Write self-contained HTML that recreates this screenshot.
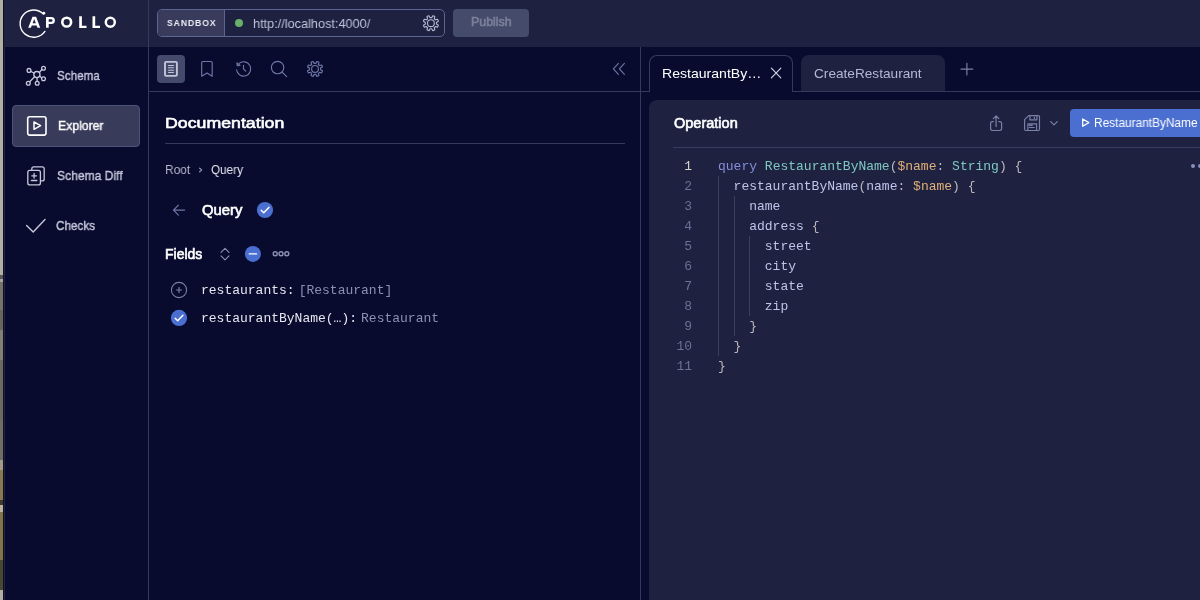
<!DOCTYPE html>
<html><head><meta charset="utf-8">
<style>
*{margin:0;padding:0;box-sizing:border-box}
html,body{width:1200px;height:600px;overflow:hidden;background:#080b2d;font-family:"Liberation Sans",sans-serif}
.a{position:absolute}
.txt{white-space:nowrap;line-height:1;transform-origin:0 0;will-change:transform}
svg.a{overflow:visible}
#strip{left:0;top:0;width:3px;height:600px;background:linear-gradient(#b1aea7 0px,#b1aea7 275px,#58565a 275px,#58565a 279px,#a5a3a8 279px,#a5a3a8 282px,#77726c 282px,#77726c 310px,#6a6560 310px,#6a6560 330px,#847e76 330px,#847e76 360px,#6c6866 360px,#6c6866 420px,#706c69 420px,#706c69 460px,#a29b8c 460px,#a29b8c 470px,#877a52 470px,#877a52 500px,#3d3b36 500px,#3d3b36 505px,#b9b29e 505px,#b9b29e 512px,#807448 512px,#807448 560px,#4a4638 560px,#4a4638 590px,#b0aea8 590px,#b0aea8 600px)}
#strip2{left:3px;top:0;width:1px;height:600px;background:#111}
#strip3{left:4px;top:47px;width:1px;height:553px;background:#1d2250}
#top{left:4px;top:0;width:1196px;height:47px;background:#1e213f}
#vl1{left:148px;top:0;width:1px;height:600px;background:#353a5c}
#vl2{left:640px;top:47px;width:1px;height:553px;background:#353a5c}
.code{will-change:transform;font-family:"Liberation Mono",monospace;font-size:13px;line-height:20px;white-space:pre;color:#c0c4ea}
.ln{will-change:transform;font-family:"Liberation Mono",monospace;font-size:13px;line-height:20px;white-space:pre;color:#6b7096;text-align:right;width:30px}
.kw{color:#858ddc}.nm{color:#7fc9c0}.vr{color:#e0b07a}.pu{color:#b9b8bd}
.guide{width:1px;background:#3b3f62}
</style></head><body>
<div id="strip" class="a"></div><div id="strip2" class="a"></div><div id="strip3" class="a"></div>
<div id="top" class="a"></div>
<div id="vl1" class="a"></div>
<div id="vl2" class="a"></div>

<!-- Logo -->
<svg class="a" style="left:0;top:0" width="148" height="47" viewBox="0 0 148 47">
  <path d="M43.1 13.8 A13.6 13.6 0 1 0 44.9 31.4" fill="none" stroke="#fff" stroke-width="1.4" stroke-linecap="round"/>
  <circle cx="43.8" cy="13.2" r="1.45" fill="#fff"/>
  <path fill="#fff" fill-rule="evenodd" d="M28.2 27.8 L32.5 16.8 L36.1 16.8 L40.2 27.8 L37.5 27.8 L36.6 25.4 L31.8 25.4 L30.9 27.8 Z M32.6 23.2 L35.8 23.2 L34.2 18.9 Z"/>
  <path fill="#fff" fill-rule="evenodd" d="M46 27.8 V16.9 H51.3 A3.6 3.6 0 0 1 51.3 24.1 H48.7 V27.8 Z M48.7 19.2 V21.8 H51.2 A1.3 1.3 0 0 0 51.2 19.2 Z"/>
  <circle cx="66.7" cy="22.15" r="4.4" fill="none" stroke="#fff" stroke-width="2.6"/>
  <path fill="#fff" d="M79.2 16.3 H81.9 V25.8 H86.5 V27.9 H79.2 Z M92.5 16.3 H95.2 V25.8 H100 V27.9 H92.5 Z"/>
  <circle cx="110.3" cy="22.2" r="4.5" fill="none" stroke="#fff" stroke-width="2.5"/>
</svg>

<!-- Sidebar nav -->
<div class="a" style="left:12px;top:105px;width:128px;height:42px;background:#393b5a;border:1px solid #4a5379;border-radius:4px"></div>
<svg class="a" style="left:0;top:0" width="148" height="300" viewBox="0 0 148 300" fill="none" stroke="#c5c8dc" stroke-width="1.3" stroke-linecap="round" stroke-linejoin="round">
  <!-- schema -->
  <circle cx="36.9" cy="74.6" r="3.1"/>
  <circle cx="29" cy="70.4" r="1.9"/><circle cx="43.5" cy="68.3" r="1.9"/><circle cx="43.5" cy="78.8" r="1.9"/>
  <circle cx="28.3" cy="83.2" r="1.9"/><circle cx="37.2" cy="83.2" r="1.9"/>
  <path d="M30.7 71.3 L34.2 73.2 M41.9 69.5 L39.2 72.6 M41.8 77.9 L39.8 76.2 M29.7 81.8 L34.6 76.8 M37.1 81.3 L37.0 77.7"/>
  <!-- explorer -->
  <rect x="27.7" y="116.8" width="18.3" height="18.3" rx="2" stroke="#fff" stroke-width="1.6"/>
  <path d="M34 122 L40.6 125.6 L34 129.3 Z" stroke="#fff" stroke-width="1.5"/>
  <!-- schema diff -->
  <path d="M31.8 169.5 V168.9 A2 2 0 0 1 33.8 166.9 H42.2 A2 2 0 0 1 44.2 168.9 V178.9 A2 2 0 0 1 42.2 180.9 H41"/>
  <rect x="27.8" y="170.4" width="12.6" height="14.5" rx="2"/>
  <path d="M34.1 173.4 V178.1 M31.8 175.8 H36.5 M31.4 180.5 H36.8"/>
  <!-- checks -->
  <path d="M26.6 225.4 L33.2 232 L45 219.6" stroke-width="1.4"/>
</svg>

<!-- Top bar controls -->
<div class="a" style="left:157px;top:9px;width:288px;height:28px;border:1px solid #5c6494;border-radius:5px;overflow:hidden">
  <div class="a" style="left:0;top:0;width:67px;height:26px;background:#393b5c;border-right:1px solid #5c6494"></div>
</div>
<div class="a" style="left:235px;top:19px;width:8px;height:8px;border-radius:50%;background:#6ab06a"></div>
<svg class="a" style="left:0;top:0" width="460" height="47" viewBox="0 0 460 47" fill="none" stroke="#b5bad4" stroke-width="1.1" stroke-linejoin="round"><path d="M438.36 25.11A7.7 7.7 0 0 1 437.53 27.12L435.38 26.56A5.6 5.6 0 0 1 434.26 27.68L434.82 29.83A7.7 7.7 0 0 1 432.81 30.66L431.69 28.74A5.6 5.6 0 0 1 430.11 28.74L428.99 30.66A7.7 7.7 0 0 1 426.98 29.83L427.54 27.68A5.6 5.6 0 0 1 426.42 26.56L424.27 27.12A7.7 7.7 0 0 1 423.44 25.11L425.36 23.99A5.6 5.6 0 0 1 425.36 22.41L423.44 21.29A7.7 7.7 0 0 1 424.27 19.28L426.42 19.84A5.6 5.6 0 0 1 427.54 18.72L426.98 16.57A7.7 7.7 0 0 1 428.99 15.74L430.11 17.66A5.6 5.6 0 0 1 431.69 17.66L432.81 15.74A7.7 7.7 0 0 1 434.82 16.57L434.26 18.72A5.6 5.6 0 0 1 435.38 19.84L437.53 19.28A7.7 7.7 0 0 1 438.36 21.29L436.44 22.41A5.6 5.6 0 0 1 436.44 23.99L438.36 25.11Z"/><circle cx="430.9" cy="23.2" r="3.4"/></svg>
<div class="a" style="left:453px;top:9px;width:76px;height:28px;background:#454b6b;border-radius:4px"></div>

<!-- Docs toolbar -->
<div class="a" style="left:157px;top:55px;width:28px;height:28px;background:#434a6c;border-radius:4px"></div>
<svg class="a" style="left:0;top:0" width="640" height="100" viewBox="0 0 640 100" fill="none" stroke="#6e77a8" stroke-width="1.15" stroke-linecap="round" stroke-linejoin="round">
  <rect x="165" y="61.9" width="11.9" height="14" rx="1.2" stroke="#c2c5d8" stroke-width="1.9"/>
  <path d="M168.1 65.5 H173.9 M168.1 67.8 H173.9 M168.1 70.2 H173.9 M168.1 72.5 H173.9" stroke="#c2c5d8" stroke-width="1.1" stroke-linecap="butt"/>
  <path d="M201.7 76.2 V62.8 A1.3 1.3 0 0 1 203 61.5 H210.9 A1.3 1.3 0 0 1 212.2 62.8 V76.2 L207 73 Z"/>
  <!-- history -->
  <path d="M236.5 69.8 A7.15 7.15 0 1 0 239 63.4"/>
  <path d="M236.9 63.1 L237.2 65.9 L239.9 65.4 Z" fill="#6e77a8" stroke-width="1"/>
  <path d="M243.5 65.2 V68.9 L245.7 71.1"/>
  <!-- search -->
  <circle cx="277.6" cy="67.6" r="6.2"/>
  <path d="M282.1 72.1 L286.7 76.7"/>
  <!-- gear -->
  <path d="M322.46 70.81A7.7 7.7 0 0 1 321.63 72.82L319.48 72.26A5.6 5.6 0 0 1 318.36 73.38L318.92 75.53A7.7 7.7 0 0 1 316.91 76.36L315.79 74.44A5.6 5.6 0 0 1 314.21 74.44L313.09 76.36A7.7 7.7 0 0 1 311.08 75.53L311.64 73.38A5.6 5.6 0 0 1 310.52 72.26L308.37 72.82A7.7 7.7 0 0 1 307.54 70.81L309.46 69.69A5.6 5.6 0 0 1 309.46 68.11L307.54 66.99A7.7 7.7 0 0 1 308.37 64.98L310.52 65.54A5.6 5.6 0 0 1 311.64 64.42L311.08 62.27A7.7 7.7 0 0 1 313.09 61.44L314.21 63.36A5.6 5.6 0 0 1 315.79 63.36L316.91 61.44A7.7 7.7 0 0 1 318.92 62.27L318.36 64.42A5.6 5.6 0 0 1 319.48 65.54L321.63 64.98A7.7 7.7 0 0 1 322.46 66.99L320.54 68.11A5.6 5.6 0 0 1 320.54 69.69L322.46 70.81Z"/>
  <circle cx="315" cy="68.9" r="3.4"/>
  <!-- collapse -->
  <path d="M618.4 63.4 L613.4 68.9 L618.4 74.4 M624.4 63.4 L619.4 68.9 L624.4 74.4" stroke-width="1.1"/>
</svg>
<div class="a" style="left:149px;top:91px;width:491px;height:1px;background:#353a5c"></div>

<!-- Docs content -->
<div class="a" style="left:165px;top:143px;width:460px;height:1px;background:#353a5c"></div>
<svg class="a" style="left:0;top:0" width="640" height="340" viewBox="0 0 640 340" fill="none" stroke-linecap="round" stroke-linejoin="round">
  <path d="M199.7 168.2 L201.6 170 L199.7 171.8" stroke="#8a90c0" stroke-width="1.3"/>
  <path d="M184.6 210.1 H173.6 M178.4 205.1 L173.5 210.1 L178.4 215.1" stroke="#6e77a8" stroke-width="1.2"/>
  <circle cx="265" cy="210" r="8.1" fill="#4a6fd1"/>
  <path d="M261.2 210.3 L263.7 212.8 L268.9 207.4" stroke="#fff" stroke-width="1.5"/>
  <!-- fields row -->
  <path d="M221 252.3 L225 248.3 L229 252.3 M221 255.9 L225 259.9 L229 255.9" stroke="#8c90b0" stroke-width="1.1"/>
  <circle cx="252.9" cy="253.9" r="8" fill="#4a6fd1"/>
  <path d="M249.2 253.9 H256.6" stroke="#fff" stroke-width="1.25"/>
  <circle cx="275.2" cy="253.8" r="2" stroke="#8c90b0" stroke-width="1.4"/>
  <circle cx="281" cy="253.8" r="2" stroke="#8c90b0" stroke-width="1.4"/>
  <circle cx="286.8" cy="253.8" r="2" stroke="#8c90b0" stroke-width="1.4"/>
  <circle cx="179" cy="290" r="7.6" stroke="#7a7fa5" stroke-width="1.1"/>
  <path d="M179 287.4 V292.6 M176.4 290 H181.6" stroke="#7a7fa5" stroke-width="1.2"/>
  <circle cx="179" cy="317.9" r="8.1" fill="#4a6fd1"/>
  <path d="M175.2 318.2 L177.7 320.7 L182.9 315.3" stroke="#fff" stroke-width="1.5"/>
</svg>
<div class="a code" style="left:201px;top:281px;color:#e6e6f0">restaurants:<span style="color:#8c90b0;margin-left:4px">[Restaurant]</span></div>
<div class="a code" style="left:201px;top:309px;color:#e6e6f0">restaurantByName(…):<span style="color:#8c90b0;margin-left:4px">Restaurant</span></div>

<!-- Tabs -->
<div class="a" style="left:641px;top:91px;width:559px;height:1px;background:#353a5c"></div>
<div class="a" style="left:649px;top:55px;width:144px;height:37px;background:#080b2d;border:1px solid #353a5c;border-bottom:none;border-radius:8px 8px 0 0"></div>
<div class="a" style="left:801px;top:55px;width:144px;height:36px;background:#1e213f;border-radius:8px 8px 0 0"></div>
<svg class="a" style="left:0;top:0" width="1200" height="100" viewBox="0 0 1200 100" fill="none" stroke-linecap="round">
  <path d="M771.4 68.2 L780.8 77.8 M780.8 68.2 L771.4 77.8" stroke="#d6d9ea" stroke-width="1.1"/>
  <path d="M966.9 63.2 V75 M961 69.1 H972.8" stroke="#7a80a8" stroke-width="1.15"/>
</svg>

<!-- Editor panel -->
<div class="a" style="left:649px;top:100px;width:560px;height:520px;background:#1e213f;border-radius:8px"></div>
<div class="a" style="left:673px;top:147px;width:540px;height:1px;background:#383c5e"></div>
<svg class="a" style="left:0;top:0" width="1200" height="160" viewBox="0 0 1200 160" fill="none" stroke="#7a80a8" stroke-width="1.3" stroke-linecap="round" stroke-linejoin="round">
  <!-- share -->
  <path d="M993.4 121.6 H992.5 A1.9 1.9 0 0 0 990.6 123.5 V128.6 A1.9 1.9 0 0 0 992.5 130.5 H999.7 A1.9 1.9 0 0 0 1001.6 128.6 V123.5 A1.9 1.9 0 0 0 999.7 121.6 H998.8 M996.1 126.6 V116.1 M993.3 118.6 L996.1 115.8 L998.9 118.6" stroke-width="1.2"/>
  <!-- save -->
  <path d="M1028.6 115.6 H1038.3 A1.2 1.2 0 0 1 1039.5 116.8 V129.3 A1.2 1.2 0 0 1 1038.3 130.5 H1025.8 A1.2 1.2 0 0 1 1024.6 129.3 V119.6 Z M1029.9 115.6 V119.8 H1036.9 V115.6 M1034.4 117.1 V118.5 M1027.9 130.5 V123.9 H1036.6 V130.5 M1029.4 125.3 H1032.3 M1029.4 127.5 H1034.3" stroke-width="1.15"/>
  <path d="M1050.7 121.6 L1054 124.9 L1057.3 121.6" stroke-width="1.2"/>
</svg>
<div class="a" style="left:1070px;top:109px;width:140px;height:28px;background:#4a6fd1;border-radius:4px"></div>
<svg class="a" style="left:0;top:0" width="1200" height="160" viewBox="0 0 1200 160" fill="none" stroke="#fff" stroke-width="1.3" stroke-linejoin="round">
  <path d="M1082.7 119 L1088.8 122.6 L1082.7 126.2 Z"/>
</svg>

<!-- Code -->
<div class="a ln" style="left:662px;top:157px"><span style="color:#d8d5c6">1</span>
2
3
4
5
6
7
8
9
10
11</div>
<div class="a guide" style="left:718px;top:176px;height:180px"></div>
<div class="a guide" style="left:734px;top:196px;height:140px"></div>
<div class="a guide" style="left:749px;top:236px;height:80px"></div>
<div class="a code" style="left:718px;top:157px"><span class="kw">query</span> <span class="nm">RestaurantByName</span><span class="pu">(</span><span class="vr">$name</span><span class="pu">:</span> <span class="nm">String</span><span class="pu">)</span> <span class="pu">{</span>
  restaurantByName<span class="pu">(</span>name<span class="pu">:</span> <span class="vr">$name</span><span class="pu">)</span> <span class="pu">{</span>
    name
    address <span class="pu">{</span>
      street
      city
      state
      zip
    <span class="pu">}</span>
  <span class="pu">}</span>
<span class="pu">}</span></div>
<div class="a" style="left:1190.8px;top:163.8px;width:4.5px;height:4.5px;border-radius:50%;background:#8890c0"></div>
<div class="a" style="left:1197.8px;top:163.8px;width:4.5px;height:4.5px;border-radius:50%;background:#8890c0"></div>

<div class="a txt" style="left:57.00px;top:69.00px;font-size:13px;font-weight:400;color:#c5c8dc;font-family:'Liberation Sans';letter-spacing:0px;-webkit-text-stroke:0.4px #c5c8dc;transform:scaleX(0.8958)">Schema</div>
<div class="a txt" style="left:57.80px;top:119.00px;font-size:13px;font-weight:400;color:#ffffff;font-family:'Liberation Sans';letter-spacing:0px;-webkit-text-stroke:0.4px #ffffff;transform:scaleX(0.9408)">Explorer</div>
<div class="a txt" style="left:56.60px;top:168.90px;font-size:13px;font-weight:400;color:#c5c8dc;font-family:'Liberation Sans';letter-spacing:0px;-webkit-text-stroke:0.4px #c5c8dc;transform:scaleX(0.9296)">Schema Diff</div>
<div class="a txt" style="left:56.40px;top:219.00px;font-size:13px;font-weight:400;color:#c5c8dc;font-family:'Liberation Sans';letter-spacing:0px;-webkit-text-stroke:0.4px #c5c8dc;transform:scaleX(0.9023)">Checks</div>
<div class="a txt" style="left:166.50px;top:17.59px;font-size:9.7px;font-weight:700;color:#eceef5;font-family:'Liberation Sans';letter-spacing:1.1px;-webkit-text-stroke:0px #eceef5;transform:scaleX(0.8836)">SANDBOX</div>
<div class="a txt" style="left:252.74px;top:16.74px;font-size:13.3px;font-weight:400;color:#c0c4dc;font-family:'Liberation Sans';letter-spacing:0px;-webkit-text-stroke:0px #c0c4dc;transform:scaleX(0.9557)">http://localhost:4000/</div>
<div class="a txt" style="left:470.70px;top:16.20px;font-size:12.4px;font-weight:400;color:#7a8098;font-family:'Liberation Sans';letter-spacing:0px;-webkit-text-stroke:0.6px #7a8098;transform:scaleX(0.9902)">Publish</div>
<div class="a txt" style="left:164.83px;top:114.83px;font-size:15.2px;font-weight:400;color:#ffffff;font-family:'Liberation Sans';letter-spacing:0px;-webkit-text-stroke:0.6px #ffffff;transform:scaleX(1.1683)">Documentation</div>
<div class="a txt" style="left:164.78px;top:163.30px;font-size:13px;font-weight:400;color:#b3b6cc;font-family:'Liberation Sans';letter-spacing:0px;-webkit-text-stroke:0px #b3b6cc;transform:scaleX(0.9185)">Root</div>
<div class="a txt" style="left:210.70px;top:163.30px;font-size:13px;font-weight:400;color:#e6e7f0;font-family:'Liberation Sans';letter-spacing:0px;-webkit-text-stroke:0px #e6e7f0;transform:scaleX(0.9028)">Query</div>
<div class="a txt" style="left:201.70px;top:202.65px;font-size:14px;font-weight:400;color:#ffffff;font-family:'Liberation Sans';letter-spacing:0px;-webkit-text-stroke:0.6px #ffffff;transform:scaleX(1.0615)">Query</div>
<div class="a txt" style="left:165.30px;top:246.95px;font-size:14px;font-weight:400;color:#ffffff;font-family:'Liberation Sans';letter-spacing:0px;-webkit-text-stroke:0.6px #ffffff;transform:scaleX(0.9921)">Fields</div>
<div class="a txt" style="left:661.54px;top:66.64px;font-size:13.3px;font-weight:400;color:#ffffff;font-family:'Liberation Sans';letter-spacing:0px;-webkit-text-stroke:0px #ffffff;transform:scaleX(1.0582)">RestaurantBy…</div>
<div class="a txt" style="left:814.30px;top:66.64px;font-size:13.3px;font-weight:400;color:#b4b9d4;font-family:'Liberation Sans';letter-spacing:0px;-webkit-text-stroke:0px #b4b9d4;transform:scaleX(1.0257)">CreateRestaurant</div>
<div class="a txt" style="left:673.60px;top:116.15px;font-size:14px;font-weight:400;color:#ffffff;font-family:'Liberation Sans';letter-spacing:0px;-webkit-text-stroke:0.6px #ffffff;transform:scaleX(1.0361)">Operation</div>
<div class="a txt" style="left:1093.51px;top:116.54px;font-size:12px;font-weight:400;color:#ffffff;font-family:'Liberation Sans';letter-spacing:0px;-webkit-text-stroke:0px #ffffff;transform:scaleX(0.9894)">RestaurantByName</div>
</body></html>
